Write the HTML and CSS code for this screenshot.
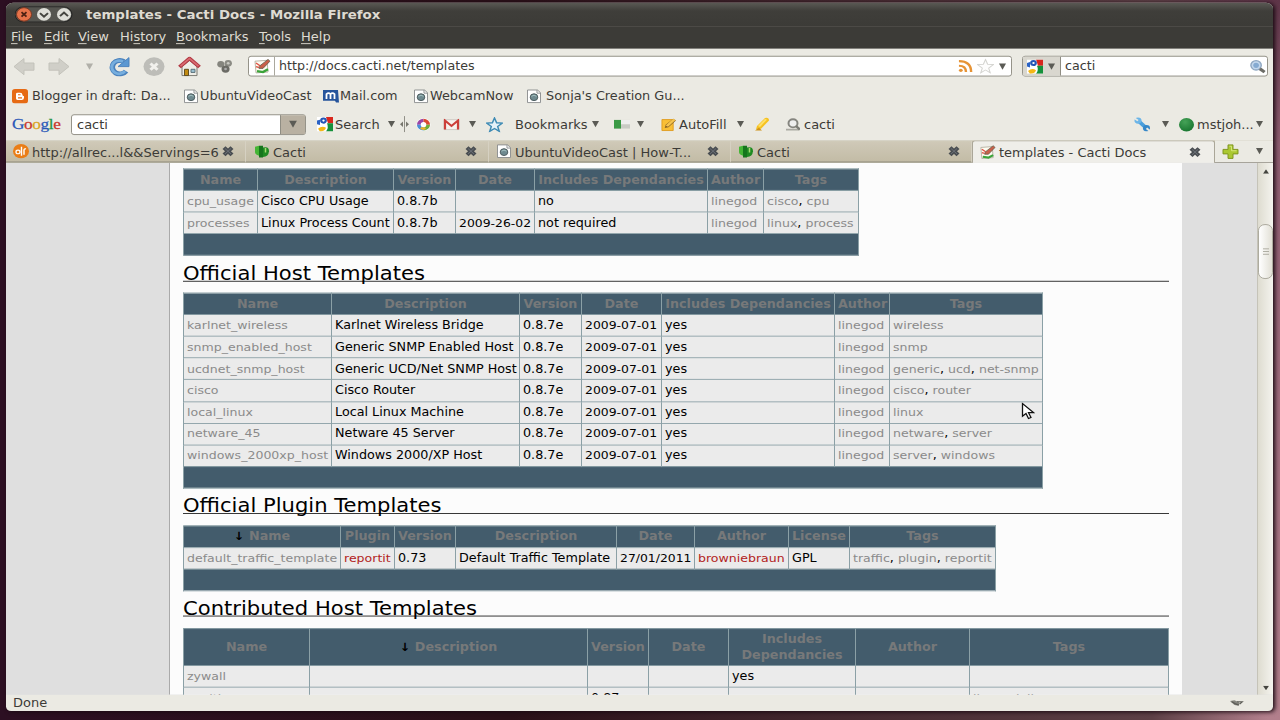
FILE: index.html
```html
<!DOCTYPE html>
<html lang="en">
<head>
    <meta charset="UTF-8">
    <title>templates - Cacti Docs</title>
    <link rel="stylesheet" href="styles.css">
</head>
<body>
<!-- shared icons -->
<svg class="defs" width="0" height="0">
    <symbol id="i-page" viewBox="0 0 16 16"><path d="M1.500 1h10l3 3v11h-13z" fill="#fff" stroke="#8d8f90"/><path d="M11 1v3.500h3.500" fill="none" stroke="#8d8f90"/><circle cx="8" cy="9" r="3.800" fill="#6f8a90" stroke="#4a585c"/><path d="M5.500 8q2.500-2.500 5 0" stroke="#a8c4c4" fill="none"/></symbol>
    <symbol id="i-doku" viewBox="0 0 18 18"><path d="M2 3l12-1 1 13-12 1z" fill="#fdfbf0" stroke="#b5b1a2"/><path d="M3 5l4 3M3 9l3 1" stroke="#e05548" stroke-width="1.500"/><path d="M6 11l1-3 8-7 2 2-7 8z" fill="#c9604a" stroke="#5b5b48" stroke-width=".8"/><path d="M4 14l6 1 5-3" stroke="#3ba43a" stroke-width="2.500" fill="none"/></symbol>
    <symbol id="i-cactus" viewBox="0 0 16 16"><path d="M1 3l4-1v11q-4-1-4-4z" fill="#45b535"/><path d="M5 2h4v13H5z" fill="#16761c"/><path d="M9 4q6-2 6 4-.5 6-6 6.500z" fill="#1f8a22"/><path d="M11.500 4.500v5" stroke="#a6dd71" stroke-width="1.500"/></symbol>
    <symbol id="i-goog" viewBox="0 0 16 16"><path d="M0 0h16v16H0z" fill="#fff"/><path d="M9 0h7v7h-5z" fill="#d9271d"/><path d="M10 7h6v9h-7q3-4 1-9z" fill="#15913b"/><path d="M0 4l3-1v6L0 8z" fill="#2a62c5"/><circle cx="6.500" cy="4" r="2.300" fill="#fff" stroke="#2456b5" stroke-width="2.200"/><path d="M1 13q4-4 8-1-1 4-6 4z" fill="#f4b716"/></symbol>
    <symbol id="i-close" viewBox="0 0 14 14"><path d="M3 3l8 8M11 3l-8 8" stroke="#4a4e52" stroke-width="4.200"/><path d="M4 4l6 6M10 4l-6 6" stroke="#6b7177" stroke-width="1"/></symbol>
    <symbol id="i-down" viewBox="0 0 8 8"><path d="M0 0h8L4 8z" fill="#5b5b55"/></symbol>
    <symbol id="i-balls" viewBox="0 0 16 16"><circle cx="4.500" cy="6" r="3.300" fill="#85857e"/><circle cx="11.500" cy="5" r="3.500" fill="#8b8b84"/><circle cx="9" cy="11" r="3.800" fill="#6b6b65"/><circle cx="11.500" cy="5" r="1.300" fill="#c9c9c2"/><circle cx="9" cy="11" r="1.300" fill="#aaa"/></symbol>
</svg>

<div class="screen">
    <div class="window">
        <div class="titlebar">
            <svg class="winbtns" viewBox="0 0 58 18" width="58" height="18"><rect width="57" height="17" y=".5" rx="8.500" fill="#555550" stroke="#222"/><circle cx="9" cy="9" r="7.500" fill="#e7734a" stroke="#7c3620"/><circle cx="29" cy="9" r="7" fill="#deded8"/><circle cx="49" cy="9" r="7" fill="#deded8"/><path d="M6.500 6.500l5 5M11.500 6.500l-5 5" stroke="#4f2213" stroke-width="1.800"/><path d="M25 7.500l4 4 4-4M45 11l4-4 4 4" stroke="#44443f" stroke-width="2" fill="none"/></svg>
            <span>templates - Cacti Docs - Mozilla Firefox</span>
        </div>
        <div class="menubar">
            <span class="m-file"><u>F</u>ile</span>
            <span class="m-edit"><u>E</u>dit</span>
            <span class="m-view"><u>V</u>iew</span>
            <span class="m-history">Hi<u>s</u>tory</span>
            <span class="m-bookmarks"><u>B</u>ookmarks</span>
            <span class="m-tools"><u>T</u>ools</span>
            <span><u>H</u>elp</span>
        </div>

        <div class="bar nav">
            <svg class="arrow" viewBox="0 0 22 20" width="22" height="20"><path d="M1 10L11 1v5h10v8H11v5z" fill="#d0cfc8" stroke="#c2c1b9"/></svg>
            <svg class="arrow-r" viewBox="0 0 22 20" width="22" height="20"><path d="M21 10L11 1v5H1v8h10v5z" fill="#d0cfc8" stroke="#c2c1b9"/></svg>
            <svg class="nav-drop" width="7" height="8" opacity=".4"><use href="#i-down"/></svg>
            <svg class="reload" viewBox="0 0 22 22" width="22" height="22"><path d="M18 16A7.500 7.500 0 1 1 16 5.500" fill="none" stroke="#4a82bd" stroke-width="5.500"/><path d="M21 1v10H10z" fill="#5b98d2" stroke="#4a82bd"/><path d="M17 16A7.300 7.300 0 1 1 15 5.500" fill="none" stroke="#76aede" stroke-width="3"/></svg>
            <svg class="stop" viewBox="0 0 22 22" width="22" height="22"><circle cx="11" cy="11" r="10.500" fill="#bdbdb8"/><path d="M7.500 7.500l7 7M14.500 7.500l-7 7" stroke="#f1f0ec" stroke-width="3"/></svg>
            <svg class="home" viewBox="0 0 22 22" width="23" height="22"><path d="M3.500 11v10h15V11L11 4z" fill="#efeee7" stroke="#74736a"/><path d="M6 14h4v7H6z" fill="#c18a10" stroke="#5d4a1d"/><path d="M12.500 14h4v3.500h-4z" fill="#9ac0d0" stroke="#587078"/><path d="M1 11.500L11 2l10 9.500" fill="none" stroke="#b23a44" stroke-width="4"/><path d="M2 10.500L11 2l9 8.500" fill="none" stroke="#d96a70" stroke-width="1.800"/></svg>
            <svg class="balls" width="17" height="17"><use href="#i-balls"/></svg>
            <div class="field url">
                <svg class="fav" width="18" height="18"><use href="#i-doku"/></svg>
                <span>http://docs.cacti.net/templates</span>
                <svg class="rss" viewBox="0 0 16 16" width="15" height="15"><circle cx="3" cy="13" r="2" fill="#e69335"/><path d="M1 7.500Q8.500 7.500 8.500 15M1 2q13 0 13 13" fill="none" stroke="#e69335" stroke-width="2.600"/></svg>
                <svg class="star" viewBox="0 0 16 16" width="17" height="17"><path d="M8 1l2 5 5.500.3L11 10l1.500 5L8 12l-4.500 3L5 10 .5 6.300 6 6z" fill="#fdfdfd" stroke="#d4d4d0"/></svg>
                <svg width="7" height="8"><use href="#i-down"/></svg>
            </div>
            <div class="field search">
                <div class="engine"><svg width="16" height="16"><use href="#i-goog"/></svg><svg width="7" height="8"><use href="#i-down"/></svg></div>
                <span>cacti</span>
                <svg viewBox="0 0 18 16" width="17" height="16"><circle cx="7.500" cy="6.500" r="5.500" fill="#c3d7ec" stroke="#8fa7c1" stroke-width="1.500"/><circle cx="7.500" cy="6.500" r="3" fill="#85aad1"/><path d="M11.500 10.500l5 4" stroke="#6d6d68" stroke-width="3.500"/></svg>
            </div>
        </div>

        <div class="bar bookmarks">
            <span class="b-blogger"><svg viewBox="0 0 16 16" width="16" height="16"><rect width="16" height="16" rx="3" fill="#e66a14"/><path d="M5.500 4H8q2.500 0 2.500 2.500 0 1 1.500 1.500v1.500Q12 12 9.500 12h-4Q4 12 4 10.500v-5Q4 4 5.500 4z" fill="#fff"/><path d="M6 6.300h2.500M6 9.700h4" stroke="#e66a14" stroke-width="1.300"/></svg>Blogger in draft: Da...</span>
            <span class="b-uvc"><svg width="16" height="16"><use href="#i-page"/></svg>UbuntuVideoCast</span>
            <span class="b-mail"><svg viewBox="0 0 16 16" width="16" height="16"><path d="M0 1h15l1 14h-3l-1-2H0z" fill="#26549c"/><path d="M3.500 11V5.500q2-2 4 0V11M7.500 5.500q2-2 4 0V11" stroke="#fff" stroke-width="1.800" fill="none"/></svg>Mail.com</span>
            <span class="b-cam"><svg width="16" height="16"><use href="#i-page"/></svg>WebcamNow</span>
            <span class="b-sonja"><svg width="16" height="16"><use href="#i-page"/></svg>Sonja's Creation Gu...</span>
        </div>

        <div class="bar gbar">
            <span class="glogo"><i class="bl">G</i><i class="re">o</i><i class="ye">o</i><i class="bl">g</i><i class="gr">l</i><i class="re">e</i></span>
            <div class="field gfield"><span>cacti</span><div class="gdrop"><svg width="8" height="8"><use href="#i-down"/></svg></div></div>
            <span class="g-search"><svg width="16" height="16"><use href="#i-goog"/></svg>Search</span>
            <svg class="g-d1" width="7" height="8"><use href="#i-down"/></svg>
            <svg class="g-split" viewBox="0 0 9 18" width="9" height="18"><path d="M4.500 0v18" stroke="#8c8b83"/><path d="M0 9l3-3v6zM9 9L6 6v6z" fill="#77766e"/></svg>
            <svg class="g-pic" viewBox="0 0 16 16" width="15" height="15"><circle cx="8" cy="8" r="7.500" fill="#fff"/><path d="M3 8a5 5 0 0 1 5-5" stroke="#9b45a5" stroke-width="4" fill="none"/><path d="M8 3a5 5 0 0 1 5 5" stroke="#dd4932" stroke-width="4" fill="none"/><path d="M13 8a5 5 0 0 1-5 5" stroke="#6fae3d" stroke-width="4" fill="none"/><path d="M8 13a5 5 0 0 1-5-5" stroke="#4b8fd6" stroke-width="4" fill="none"/><path d="M10 12a5 5 0 0 1-5 0" stroke="#e9b52e" stroke-width="3" fill="none"/></svg>
            <svg class="g-mail" viewBox="0 0 17 13" width="17" height="13"><path d="M1 1h15v11H1z" fill="#f7f2ee" stroke="#cfc8c3"/><path d="M2 12V2l6.500 6L15 2v10" stroke="#cc3f3a" stroke-width="2.200" fill="none"/></svg>
            <svg class="g-d2" width="7" height="8"><use href="#i-down"/></svg>
            <svg class="g-star" viewBox="0 0 16 16" width="17" height="17"><path d="M8 1l2 5 5.500.3L11 10l1.500 5L8 12l-4.500 3L5 10 .5 6.300 6 6z" fill="#e4f1f8" stroke="#3f8bb4" stroke-width="1.400"/></svg>
            <span class="g-book">Bookmarks</span>
            <svg class="g-d3" width="7" height="8"><use href="#i-down"/></svg>
            <svg class="g-rank" viewBox="0 0 16 10" width="16" height="10"><path d="M0 0h16v10H0z" fill="#c9cbc5"/><path d="M0 0h7v10H0z" fill="#3a9a45"/><path d="M7 0h9v5H7z" fill="#eee"/></svg>
            <svg class="g-d4" width="7" height="8"><use href="#i-down"/></svg>
            <span class="g-auto"><svg viewBox="0 0 16 16" width="15" height="15"><path d="M1 2h12v13H1z" fill="#f9bf35" stroke="#e09a1c"/><path d="M4 12l1-4 8-7 3 2-8 8z" fill="#8a6424"/><path d="M5 9l8-8 2.500 1.500-8 8z" fill="#f7c44c"/></svg>AutoFill</span>
            <svg class="g-d5" width="7" height="8"><use href="#i-down"/></svg>
            <svg class="g-pen" viewBox="0 0 16 16" width="16" height="16"><path d="M2 14l1-4 8-9q4-1 4 3l-8 9z" fill="#f6c220"/><path d="M4 10l7-8 2 1-7 8z" fill="#ffe067"/><path d="M1 15h7l-3-3z" fill="#cf9218"/></svg>
            <span class="g-find"><svg viewBox="0 0 14 15" width="14" height="15"><path d="M0 12h13v2H0z" fill="#aaa9a2"/><circle cx="7" cy="6" r="4.500" fill="#eee" stroke="#85857f" stroke-width="2"/><path d="M10 9l4 4" stroke="#7c7c76" stroke-width="2.500"/></svg>cacti</span>
            <svg class="g-tool" viewBox="0 0 16 16" width="16" height="16"><path d="M4 4l9 9" stroke="#4b9fdc" stroke-width="4"/><circle cx="4" cy="4" r="3.500" fill="#6cb5e8"/><circle cx="12.500" cy="12.500" r="3.500" fill="#3587c8"/><path d="M0 1l4 3M12.500 12.500l3.500 3" stroke="#ebeae3" stroke-width="2"/></svg>
            <svg class="g-d6" width="7" height="8"><use href="#i-down"/></svg>
            <span class="g-user"><i class="dot"></i>mstjoh...</span>
            <svg width="7" height="8"><use href="#i-down"/></svg>
        </div>

        <div class="tabs">
            <div class="tab t1"><svg class="fav" viewBox="0 0 16 16" width="16" height="16"><circle cx="8" cy="8" r="8" fill="#ea7d16"/><path d="M8.500 3v10M11 12V7q0-2 2-1.500" stroke="#fff" stroke-width="1.400" fill="none"/><circle cx="5" cy="8.800" r="2" stroke="#fff" stroke-width="1.300" fill="none"/></svg><span>http://allrec...l&amp;&amp;Servings=6</span><svg class="x" width="14" height="14"><use href="#i-close"/></svg></div>
            <div class="tab t2"><svg class="fav" width="16" height="16"><use href="#i-cactus"/></svg><span>Cacti</span><svg class="x" width="14" height="14"><use href="#i-close"/></svg></div>
            <div class="tab t3"><svg class="fav" width="16" height="16"><use href="#i-page"/></svg><span>UbuntuVideoCast | How-T...</span><svg class="x" width="14" height="14"><use href="#i-close"/></svg></div>
            <div class="tab t4"><svg class="fav" width="16" height="16"><use href="#i-cactus"/></svg><span>Cacti</span><svg class="x" width="14" height="14"><use href="#i-close"/></svg></div>
            <div class="tab active"><svg class="fav" width="17" height="17"><use href="#i-doku"/></svg><span>templates - Cacti Docs</span><svg class="x" width="14" height="14"><use href="#i-close"/></svg></div>
            <div class="tabend">
                <svg viewBox="0 0 17 17" width="17" height="17"><path d="M6 1h5v5h5v5h-5v5H6v-5H1V6h5z" fill="#abc832" stroke="#7d941f"/><path d="M7.500 2.500h2v5h5" stroke="#d6e77f" fill="none"/></svg>
                <svg width="7" height="8"><use href="#i-down"/></svg>
            </div>
        </div>

        <div class="content">
            <div class="page">
                <table class="official-script">
                    <colgroup><col><col><col><col><col><col><col></colgroup>
                    <tr><th>Name</th><th>Description</th><th>Version</th><th>Date</th><th>Includes Dependancies</th><th>Author</th><th>Tags</th></tr>
                    <tr><td><a>cpu_usage</a></td><td>Cisco CPU Usage</td><td>0.8.7b</td><td></td><td>no</td><td><a>linegod</a></td><td><a>cisco</a>, <a>cpu</a></td></tr>
                    <tr><td><a>processes</a></td><td>Linux Process Count</td><td>0.8.7b</td><td class="date">2009-26-02</td><td>not required</td><td><a>linegod</a></td><td><a>linux</a>, <a>process</a></td></tr>
                    <tr><th colspan="7"></th></tr>
                </table>

                <h2>Official Host Templates</h2>
                <table class="official-host">
                    <colgroup><col><col><col><col><col><col><col></colgroup>
                    <tr><th>Name</th><th>Description</th><th>Version</th><th>Date</th><th>Includes Dependancies</th><th>Author</th><th>Tags</th></tr>
                    <tr><td><a>karlnet_wireless</a></td><td>Karlnet Wireless Bridge</td><td>0.8.7e</td><td class="date">2009-07-01</td><td>yes</td><td><a>linegod</a></td><td><a>wireless</a></td></tr>
                    <tr><td><a>snmp_enabled_host</a></td><td>Generic SNMP Enabled Host</td><td>0.8.7e</td><td class="date">2009-07-01</td><td>yes</td><td><a>linegod</a></td><td><a>snmp</a></td></tr>
                    <tr><td><a>ucdnet_snmp_host</a></td><td>Generic UCD/Net SNMP Host</td><td>0.8.7e</td><td class="date">2009-07-01</td><td>yes</td><td><a>linegod</a></td><td><a>generic</a>, <a>ucd</a>, <a>net-snmp</a></td></tr>
                    <tr><td><a>cisco</a></td><td>Cisco Router</td><td>0.8.7e</td><td class="date">2009-07-01</td><td>yes</td><td><a>linegod</a></td><td><a>cisco</a>, <a>router</a></td></tr>
                    <tr><td><a>local_linux</a></td><td>Local Linux Machine</td><td>0.8.7e</td><td class="date">2009-07-01</td><td>yes</td><td><a>linegod</a></td><td><a>linux</a></td></tr>
                    <tr><td><a>netware_45</a></td><td>Netware 45 Server</td><td>0.8.7e</td><td class="date">2009-07-01</td><td>yes</td><td><a>linegod</a></td><td><a>netware</a>, <a>server</a></td></tr>
                    <tr><td><a>windows_2000xp_host</a></td><td>Windows 2000/XP Host</td><td>0.8.7e</td><td class="date">2009-07-01</td><td>yes</td><td><a>linegod</a></td><td><a>server</a>, <a>windows</a></td></tr>
                    <tr><th colspan="7"></th></tr>
                </table>

                <h2>Official Plugin Templates</h2>
                <table class="official-plugin">
                    <colgroup><col><col><col><col><col><col><col><col></colgroup>
                    <tr><th><b>↓</b> Name</th><th>Plugin</th><th>Version</th><th>Description</th><th>Date</th><th>Author</th><th>License</th><th>Tags</th></tr>
                    <tr><td><a>default_traffic_template</a></td><td><a class="missing">reportit</a></td><td>0.73</td><td>Default Traffic Template</td><td class="date">27/01/2011</td><td><a class="missing">browniebraun</a></td><td>GPL</td><td><a>traffic</a>, <a>plugin</a>, <a>reportit</a></td></tr>
                    <tr><th colspan="8"></th></tr>
                </table>

                <h2>Contributed Host Templates</h2>
                <table class="contrib-host">
                    <colgroup><col><col><col><col><col><col><col></colgroup>
                    <tr class="tall"><th>Name</th><th><b>↓</b> Description</th><th>Version</th><th>Date</th><th>Includes<br>Dependancies</th><th>Author</th><th>Tags</th></tr>
                    <tr><td><a>zywall</a></td><td></td><td></td><td></td><td>yes</td><td></td><td></td></tr>
                    <tr><td><a>zenith</a></td><td></td><td>0.87</td><td></td><td></td><td></td><td><a>linux</a>, <a>dell</a></td></tr>
                </table>
            </div>
            <div class="scrollbar">
                <svg viewBox="0 0 6 5" width="6" height="5"><path d="M0 5l3-5 3 5z" fill="#44443f"/></svg>
                <div class="thumb"><i></i><i></i><i></i></div>
                <svg viewBox="0 0 6 5" width="6" height="5"><path d="M0 0l3 5 3-5z" fill="#44443f"/></svg>
            </div>
        </div>

        <div class="status">
            <span>Done</span>
            <svg viewBox="0 0 16 10" width="14" height="9"><path d="M0 2l5-1 6 3-1 4-5-1z" fill="#85857e"/><path d="M2 3l5 3 3 1M8 3h6l-3 3" stroke="#5c5c57" stroke-width="1.500" fill="none"/></svg>
        </div>
    </div>
    <svg class="cursor" viewBox="0 0 14 20" width="14" height="20"><path d="M1.500 1.500v14l3.500-3 2.500 5.500 2.500-1.200L7.500 11.500h5z" fill="#fff" stroke="#111" stroke-width="1.300"/></svg>
</div>
</body>
</html>
```

FILE: styles.css
```css
html {
    height: 720px;
    overflow: hidden;
}
body {
    margin: 0;
    height: 720px;
    overflow: hidden;
}
.defs {
    display: block;
}
svg {
    flex: none;
}

/* 1280x800 desktop shown in a 16:9 frame */
.screen {
    position: relative;
    box-sizing: border-box;
    width: 1280px;
    height: 800px;
    margin-bottom: -80px;
    padding: 3px 7px 10px 6px;
    transform: scaleY(.9);
    transform-origin: 0 0;
    background: linear-gradient(90deg, #2c0f22, #2a1018 40%, #5d4046 90%, transparent 99%), linear-gradient(#5e3548, #8d5c70 20%, #b27f8c);
    font-family: "DejaVu Sans", sans-serif;
    font-size: 13px;
    color: #3c3b37;
}
.window {
    display: flex;
    flex-direction: column;
    height: 787px;
    border-radius: 7px 7px 5px 5px;
    overflow: hidden;
    background: #ebeae3;
    box-shadow: 2px 1px 5px #1a0a12;
}

.titlebar {
    display: flex;
    align-items: center;
    height: 26px;
    flex: none;
    background: linear-gradient(#5a5954, #3f3e3a 35%, #3c3b37);
    color: #dfdbd2;
    font-size: 13.350px;
    font-weight: bold;
    white-space: pre;
}
.winbtns {
    margin: 0 13px 0 9px;
}
.menubar {
    display: flex;
    align-items: center;
    height: 25px;
    flex: none;
    padding-left: 5px;
    background: #3c3b37;
    color: #dfdbd2;
}
.menubar u {
    text-underline-offset: 2px;
}
.m-file { width: 33px; }
.m-edit { width: 34px; }
.m-view { width: 42px; }
.m-history { width: 56px; }
.m-bookmarks { width: 83px; }
.m-tools { width: 42px; }

.bar {
    display: flex;
    align-items: center;
    flex: none;
    white-space: nowrap;
}
.bar span {
    display: flex;
    align-items: center;
}
.field {
    display: flex;
    align-items: center;
    box-sizing: border-box;
    height: 23px;
    border: 1px solid #8f8d83;
    border-radius: 3px;
    background: #fff;
}

.nav { height: 39px; }
.arrow { margin-left: 7px; }
.arrow-r { margin-left: 13px; }
.nav-drop { margin-left: 16px; }
.reload { margin-left: 15px; }
.stop { margin-left: 13px; }
.home { margin-left: 13px; }
.balls { margin-left: 15px; }
.url {
    width: 764px;
    margin-left: 15px;
    padding: 0 5px 0 4px;
    font-size: 12.700px;
}
.url span {
    flex: 1;
    height: 21px;
    margin-left: 3px;
    padding-left: 4px;
    border-left: 1px solid #aaa89e;
}
.url .star { margin: 0 5px 0 4px; }
.search {
    width: 246px;
    margin-left: 10px;
    padding-right: 1px;
    font-size: 12.700px;
}
.search span { flex: 1; padding-left: 4px; }
.engine {
    display: flex;
    align-items: center;
    gap: 5px;
    box-sizing: border-box;
    width: 38px;
    height: 21px;
    padding-left: 4px;
    background: #d9d7cf;
    border-right: 1px solid #8f8d83;
}

.bookmarks {
    height: 27px;
    font-size: 12.850px;
}
.bookmarks svg { margin-right: 4px; }
.bookmarks .b-uvc svg, .bookmarks .b-mail svg, .bookmarks .b-cam svg { margin-right: 1px; }
.b-blogger { width: 171px; padding-left: 6px; }
.b-uvc { width: 140px; }
.b-mail { width: 90px; }
.b-cam { width: 113px; }

.gbar { height: 36px; }
.glogo {
    width: 60px;
    padding-left: 6px;
    font-family: "Liberation Serif", serif;
    font-size: 17.300px;
    letter-spacing: -.4px;
    -webkit-text-stroke: .3px;
}
.glogo i { font-style: normal; }
.bl { color: #2a58b8; }
.re { color: #c8382d; }
.ye { color: #dba51d; }
.gr { color: #259442; }
.gfield { width: 235px; margin-right: 11px; margin-left: -1px; }
.gfield span { flex: 1; padding-left: 5px; }
.gdrop {
    display: flex;
    align-items: center;
    justify-content: center;
    width: 24px;
    height: 21px;
    background: #b9b1a2;
    border-left: 1px solid #8f8d83;
}
.g-search { width: 71px; }
.g-search svg { margin-right: 2px; }
.g-d1 { margin-right: 5px; }
.g-split { margin-right: 7px; }
.g-pic { margin-right: 12px; }
.g-mail { margin-right: 9px; }
.g-d2 { margin-right: 10px; }
.g-star { margin-right: 12px; }
.g-book { width: 77px; }
.g-d3 { margin-right: 15px; }
.g-rank { margin-right: 7px; }
.g-d4 { margin-right: 17px; }
.g-auto { width: 76px; }
.g-auto svg { margin-right: 3px; }
.g-d5 { margin-right: 10px; }
.g-pen { margin-right: 16px; }
.g-find svg { margin-right: 4px; }
.g-tool { margin-left: auto; margin-right: 12px; }
.g-d6 { margin-right: 10px; }
.g-user { width: 77px; }
.gbar > svg:last-child { margin-right: 10px; }
.dot {
    width: 15px;
    height: 15px;
    margin-right: 3px;
    border-radius: 50%;
    background: radial-gradient(circle at 40% 30%, #45a257, #0d6b26);
}

.tabs {
    display: flex;
    height: 25px;
    flex: none;
    background: #c7c1ac;
}
.tab {
    display: flex;
    align-items: center;
    box-sizing: border-box;
    white-space: nowrap;
    background: linear-gradient(#cfc9b8, #c3bca6);
    border-bottom: 2px solid #a5a08e;
    border-right: 1px solid #d6d1c2;
    border-top: 1px solid #d8d4c8;
}
.tab span { margin-left: 3px; padding-top: 2px; }
.tab .x { margin-left: auto; margin-right: 10px; }
.t1 { width: 240px; padding-left: 7px; }
.t2 { width: 243px; padding-left: 8px; }
.t3 { width: 242px; padding-left: 7px; }
.t4 { width: 241px; padding-left: 7px; }
.active {
    width: 243px;
    padding-left: 6px;
    background: #efeee9;
    border: 1px solid #aaa698;
    border-bottom: 0;
    border-radius: 3px 3px 0 0;
}
.active span { padding-top: 0; }
.active .x { margin-right: 12px; }
.tabend {
    display: flex;
    flex: 1;
    align-items: center;
    justify-content: space-between;
    padding: 0 10px 0 7px;
    background: #ebeae3;
    border-bottom: 1px solid #99968b;
}

.content {
    display: flex;
    height: 591px;
    flex: none;
    overflow: hidden;
    background: #dfdfdf;
    color: #000;
}
.page {
    box-sizing: border-box;
    width: 1013px;
    margin-left: 163px;
    padding: 6px 13px 0;
    border-left: 1px solid #aaa;
    background: #fcfcfc;
}
h2 {
    box-sizing: border-box;
    height: 28.500px;
    margin: 0 0 12.200px;
    padding-top: 6.500px;
    border-bottom: 1px solid #222;
    font-size: 21.100px;
    font-weight: normal;
    line-height: 26px;
}
table {
    border-collapse: collapse;
    table-layout: fixed;
    font-size: 12.750px;
    line-height: 18px;
}
tr { height: 24.100px; }
th, td {
    box-sizing: border-box;
    padding: 0 3px;
    border: 1px solid #8ba0a6;
    white-space: nowrap;
}
th {
    background: #435c6c;
    color: #77797a;
    text-align: center;
}
th b { color: #000; }
td {
    background: #ebebeb;
    text-align: left;
}
.date { font-size: 12.400px; }
.tall { height: 41.500px; }
a {
    color: #8a8a8a;
    font-size: 12.550px;
}
.missing { color: #b22222; }

/* column widths */
.official-script { width: 676px; }
.official-script col:nth-child(1) { width: 74px; }
.official-script col:nth-child(2) { width: 136px; }
.official-script col:nth-child(3) { width: 62px; }
.official-script col:nth-child(4) { width: 79px; }
.official-script col:nth-child(5) { width: 173px; }
.official-script col:nth-child(6) { width: 56px; }

.official-host { width: 860px; }
.official-host col:nth-child(1) { width: 148px; }
.official-host col:nth-child(2) { width: 188px; }
.official-host col:nth-child(3) { width: 62px; }
.official-host col:nth-child(4) { width: 80px; }
.official-host col:nth-child(5) { width: 173px; }
.official-host col:nth-child(6) { width: 55px; }

.official-plugin { width: 813px; }
.official-plugin col:nth-child(1) { width: 157px; }
.official-plugin col:nth-child(2) { width: 54px; }
.official-plugin col:nth-child(3) { width: 61px; }
.official-plugin col:nth-child(4) { width: 161px; }
.official-plugin col:nth-child(5) { width: 78px; }
.official-plugin col:nth-child(6) { width: 94px; }
.official-plugin col:nth-child(7) { width: 61px; }

.contrib-host { width: 986px; }
.contrib-host col:nth-child(1) { width: 126px; }
.contrib-host col:nth-child(2) { width: 278px; }
.contrib-host col:nth-child(3) { width: 61px; }
.contrib-host col:nth-child(4) { width: 80px; }
.contrib-host col:nth-child(5) { width: 127px; }
.contrib-host col:nth-child(6) { width: 114px; }

.scrollbar {
    display: flex;
    flex-direction: column;
    align-items: center;
    box-sizing: border-box;
    width: 16px;
    margin-left: auto;
    padding: 7px 0 5px;
    background: linear-gradient(90deg, #dedcd0, #f4f3ee);
    border-left: 1px solid #c5c3b8;
}
.thumb {
    display: flex;
    flex-direction: column;
    align-items: center;
    justify-content: center;
    gap: 2px;
    box-sizing: border-box;
    width: 15px;
    height: 61px;
    margin: 56px 0 auto;
    border: 1px solid #aaa89c;
    border-radius: 7px;
    background: linear-gradient(90deg, #fff, #e2e0d6);
}
.thumb i {
    width: 6px;
    height: 1px;
    background: #a9a79c;
}

.status {
    display: flex;
    align-items: center;
    justify-content: space-between;
    flex: 1;
    padding: 0 29px 0 7px;
}
.cursor {
    position: absolute;
    left: 1021px;
    top: 447px;
}
```
